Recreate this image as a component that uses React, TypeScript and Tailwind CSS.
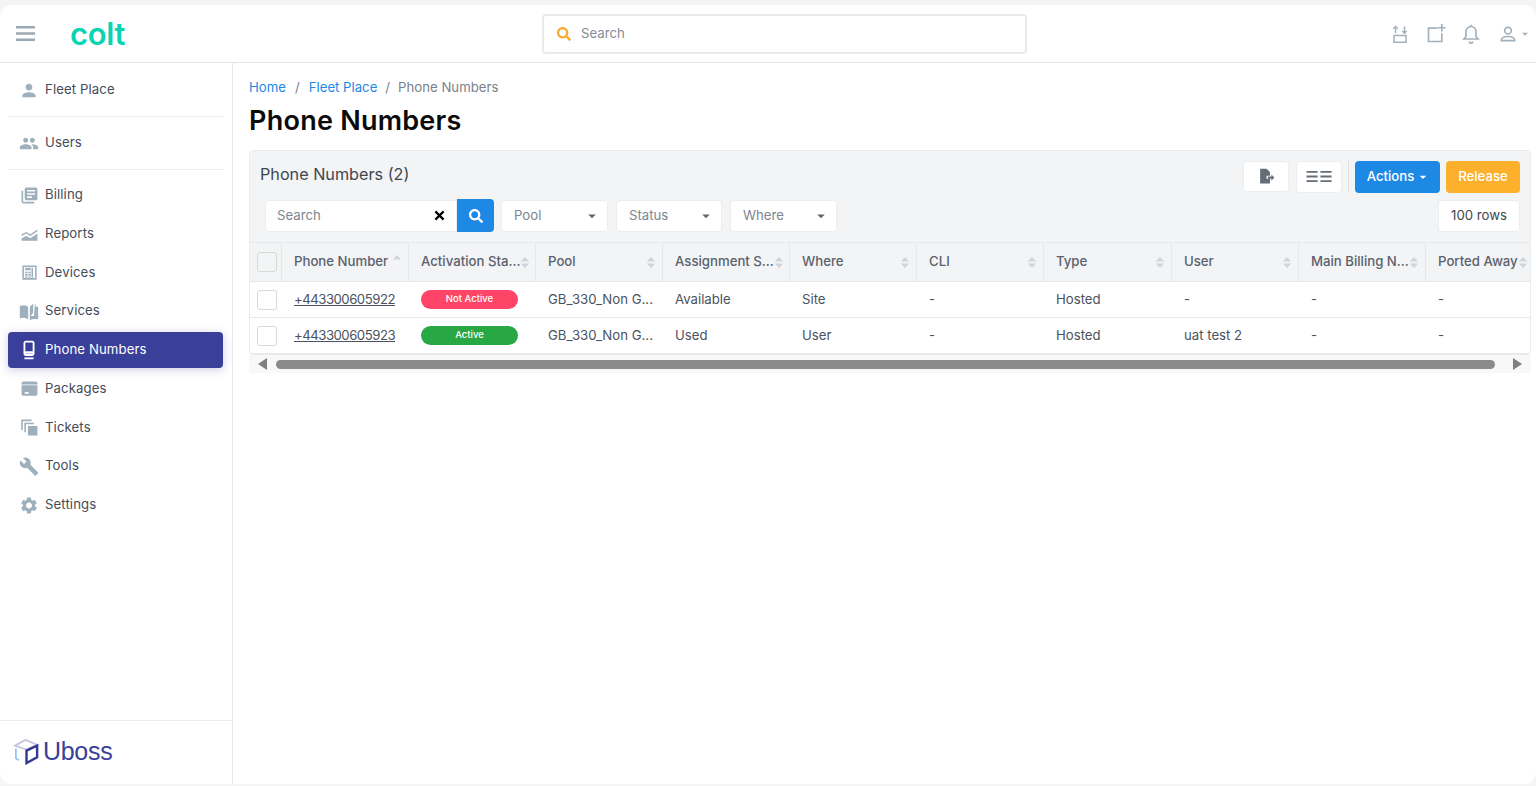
import React from "react";
import { MdPerson, MdPeople, MdLibraryBooks, MdBuild, MdSettings, MdArrowDropDown } from "react-icons/md";
import { FaSearch } from "react-icons/fa";

const ic = "w-[19px] h-[19px] fill-[#9fb0bd]";
const Reports = () => (
  <svg viewBox="0 0 24 24" className={ic}><path d="M2 20v-7l6-3 5 3 9-6v2l-9 6-5-3-6 3zm0 1v-3l6-3 5 3 9-6v9H2z" /></svg>
);
const Devices = () => (
  <svg viewBox="0 0 24 24" className={ic}><path fillRule="evenodd" d="M3 3h18v18H3V3zm2 2v14h14V5H5zm1.500 6h3v2h-3zm4 0h3v2h-3zm-4 3h3v2h-3zm4 0h3v2h-3zm-4 3h3v1.500h-3zm4 0h3v1.500h-3zm4-11h2v12.500h-2zm-8 0h7v3h-7z" /></svg>
);
const Services = () => (
  <svg viewBox="0 0 24 24" className="w-[20px] h-[20px] fill-[#9fb0bd]"><path d="M1 6c4-1.500 7-1 10 1v15c-3-2-6-2.500-10-1zM13 7l4-4v11l-3 4h4l1-14h1v3h3v15c-4-1-7-.5-10 1z" /></svg>
);
const Packages = () => (
  <svg viewBox="0 0 24 24" className={ic}><path fillRule="evenodd" d="M4 3h16a2 2 0 0 1 2 2v14a2 2 0 0 1-2 2H4a2 2 0 0 1-2-2V5a2 2 0 0 1 2-2zM2 7h20v.8H2zm4 9.500v2h5v-2H6z" /></svg>
);
const Tickets = () => (
  <svg viewBox="0 0 24 24" className={ic}><path d="M1.500 2h13v2h-11v11h-2V2zM5.500 6h12v2h-10v10h-2V6zM10 10h12v12H10z" /></svg>
);
const Phone = () => (
  <svg viewBox="0 0 24 24" className="w-[20px] h-[20px]" fill="none" stroke="#fff" strokeWidth="2.200"><rect x="6.500" y="2" width="11" height="16" rx="1.500" /><path d="M6.500 22h11" /><path d="M6.500 15h11" strokeWidth="3" /></svg>
);

function NavItem({ icon, label, active }: { icon: React.ReactNode; label: string; active?: boolean }) {
  return (
    <div className={`h-9 ml-2 mr-[9px] flex items-center rounded-[4px] pl-[11px] text-[13.200px] tracking-[0.1px] ${active ? "bg-[#3a3f9a] text-white shadow-[0_2px_10px_rgba(58,63,154,0.25)]" : "text-[#454c59]"}`}>
      <span className="w-[20px] flex justify-center shrink-0">{icon}</span>
      <span className="ml-[6px]">{label}</span>
    </div>
  );
}

function Sort({ up }: { up?: boolean }) {
  return (
    <svg viewBox="0 0 10 14" className={`w-[10px] h-[13px] shrink-0 fill-[#d0d5da] ${up ? "-mt-[3px]" : ""}`}>
      <path d="M5 1l4.500 5H.5z" />
      {!up && <path d="M5 13L.5 8h9z" />}
    </svg>
  );
}

const cols = [
  { t: "Phone Number", w: "w-[127px]", up: true },
  { t: "Activation Sta...", w: "w-[127px]" },
  { t: "Pool", w: "w-[127px]" },
  { t: "Assignment S...", w: "w-[127px]" },
  { t: "Where", w: "w-[127px]" },
  { t: "CLI", w: "w-[127px]" },
  { t: "Type", w: "w-[128px]" },
  { t: "User", w: "w-[127px]" },
  { t: "Main Billing N...", w: "w-[127px]" },
  { t: "Ported Away", w: "w-[104px]" },
];

function Check({ plain }: { plain?: boolean }) {
  return <span className={`block w-[20px] h-[20px] border border-[#d9d9d4] rounded-[3px] ${plain ? "bg-[#f3f4f5]" : "bg-white"}`} />;
}

function Cell({ w, children }: { w: string; children?: React.ReactNode }) {
  return <div className={`${w} shrink-0 pl-[12px] flex items-center overflow-hidden whitespace-nowrap`}>{children}</div>;
}

const valueWidths = ["w-[127px]", "w-[127px]", "w-[127px]", "w-[127px]", "w-[128px]", "w-[127px]", "w-[127px]", "w-[104px]"];

function Row({ num, pill, pillBg, values }: { num: string; pill: string; pillBg: string; values: string[] }) {
  return (
    <div className="flex h-[36px] text-[13.200px] text-[#4a5260] border-b border-[#e6e8ea]">
      <div className="w-[32px] shrink-0 flex items-center pl-[7px]"><Check /></div>
      <Cell w="w-[127px]"><span className="underline tracking-[-0.5px]">{num}</span></Cell>
      <Cell w="w-[127px]">
        <span className={`w-[97px] h-[19px] rounded-full flex items-center justify-center text-white text-[9.500px] font-medium ${pillBg}`}>{pill}</span>
      </Cell>
      {values.map((v, i) => (
        <Cell key={i} w={valueWidths[i]}>{v}</Cell>
      ))}
    </div>
  );
}

function Select({ label, w }: { label: string; w: string }) {
  return (
    <div className={`${w} h-[32px] bg-white rounded-[4px] border border-[#ebedef] flex items-center justify-between pl-[12px] pr-[6px] text-[13.200px] text-[#7c8591]`}>
      {label}
      <MdArrowDropDown className="w-[18px] h-[18px] text-[#5f6670]" />
    </div>
  );
}

export default function App() {
  return (
    <div className="h-[786px] w-[1536px] overflow-hidden bg-[#f5f5f5] pt-[5px] pb-[2px] font-['Inter',sans-serif] flex flex-col">
      <div className="flex-1 min-h-0 bg-white rounded-[12px] flex flex-col overflow-hidden">
        <header className="h-[58px] shrink-0 border-b border-[#e3e5e8] flex items-center">
          <div className="w-[232px] shrink-0 flex items-center pl-[16px]">
            <svg viewBox="0 0 19 15" className="w-[19px] h-[15px] fill-[#9aa8b3]"><path d="M0 0h19v2.500H0zM0 6.200h19v2.500H0zM0 12.500h19V15H0z" /></svg>
            <span className="ml-[35px] text-[31px] leading-none font-semibold text-[#0ad4b4] tracking-[-0.3px] -mt-[1px]">colt</span>
          </div>
          <div className="ml-[310px] w-[485px] h-[40px] rounded-[4px] border-2 border-[#e8eaee] flex items-center pl-[13px] text-[13.200px] text-[#848c97]">
            <FaSearch className="w-[14px] h-[14px] text-[#fbab2c]" />
            <span className="ml-[10px]">Search</span>
          </div>
          <div className="ml-auto flex items-center pr-[4px] text-[#a3b1bc]">
            <svg viewBox="0 0 24 24" className="w-[18px] h-[22px]" fill="none" stroke="#a3b1bc" strokeWidth="2"><path d="M6 11V2M3 5l3-3 3 3M18 2v9M15 8l3 3 3-3" /><rect x="4" y="14" width="16" height="9" /></svg>
            <svg viewBox="0 0 24 24" className="ml-[17px] w-[20px] h-[20px]" fill="none" stroke="#a3b1bc" strokeWidth="2"><path d="M14 5H3v16h16V11M19 0v9M14.500 4.500h9" /></svg>
            <svg viewBox="0 0 24 24" className="ml-[15px] w-[20px] h-[20px]" fill="none" stroke="#a3b1bc" strokeWidth="2"><path d="M12 3a6 6 0 0 0-6 6v6l-2.500 3h17L18 15V9a6 6 0 0 0-6-6zM12 1v2M10 21a2 2 0 0 0 4 0" /></svg>
            <svg viewBox="0 0 24 24" className="ml-[17px] w-[20px] h-[20px]" fill="none" stroke="#a3b1bc" strokeWidth="2"><circle cx="12" cy="8" r="4" /><path d="M4 20c0-3 3-5 8-5s8 2 8 5z" /></svg>
            <MdArrowDropDown className="w-[14px] h-[14px]" />
          </div>
        </header>
        <div className="flex-1 min-h-0 flex">
          <aside className="w-[233px] shrink-0 border-r border-[#e6e8ea] flex flex-col">
            <div className="flex-1 pt-[9px]">
              <NavItem icon={<MdPerson className="w-[21px] h-[21px] fill-[#9fb0bd]" />} label="Fleet Place" />
              <div className="ml-2 mr-[9px] mt-[8px] mb-[8px] border-t border-[#eceef0]" />
              <NavItem icon={<MdPeople className="w-[21px] h-[21px] fill-[#9fb0bd]" />} label="Users" />
              <div className="ml-2 mr-[9px] mt-[8px] mb-[7px] border-t border-[#eceef0]" />
              <div className="flex flex-col gap-[2.750px]">
                <NavItem icon={<MdLibraryBooks className={ic} />} label="Billing" />
                <NavItem icon={<Reports />} label="Reports" />
                <NavItem icon={<Devices />} label="Devices" />
                <NavItem icon={<Services />} label="Services" />
                <NavItem icon={<Phone />} label="Phone Numbers" active />
                <NavItem icon={<Packages />} label="Packages" />
                <NavItem icon={<Tickets />} label="Tickets" />
                <NavItem icon={<MdBuild className="w-[21px] h-[21px] fill-[#9fb0bd]" />} label="Tools" />
                <NavItem icon={<MdSettings className="w-[21px] h-[21px] fill-[#9fb0bd]" />} label="Settings" />
              </div>
            </div>
            <div className="h-[64px] border-t border-[#e9eaec] flex items-center pl-[13px] pb-[2px]">
              <svg viewBox="0 0 28 28" className="w-[27px] h-[27px]" fill="none">
                <path d="M2 8l11-6 12 5-11 5z" stroke="#c9c6e6" strokeWidth="2" />
                <path d="M14 13l11-5v12l-11 6z" stroke="#34398f" strokeWidth="2.500" />
                <path d="M3 11v10l3 2" stroke="#8cc6ea" strokeWidth="1.800" />
              </svg>
              <span className="font-['Liberation_Sans',sans-serif] text-[25px] leading-none text-[#3a3f9a] tracking-[-0.3px] ml-[3px]">Uboss</span>
            </div>
          </aside>
          <main className="flex-1 min-w-0 pl-[16px] pr-[5px] pt-[17px]">
            <nav className="h-[16px] flex items-center text-[13.200px] text-[#7a818c]">
              <span className="text-[#1e88e5]">Home</span>
              <span className="mx-[9px]">/</span>
              <span className="text-[#1e88e5]">Fleet Place</span>
              <span className="mx-[8px]">/</span>
              <span>Phone Numbers</span>
            </nav>
            <h1 className="mt-[8px] text-[27px] leading-[34px] font-semibold text-[#0b0b0b] tracking-[0.25px]">Phone Numbers</h1>
            <section className="mt-[12px] rounded-[4px] border border-[#e9ebed] bg-white">
              <div className="bg-[#f3f4f5] px-[10px] pt-[9px] pb-[10px]">
                <div className="flex items-center justify-between h-[33px]">
                  <h2 className="text-[16.200px] text-[#3f4650] font-normal -mt-[5px]">Phone Numbers (2)</h2>
                  <div className="flex items-center">
                    <div className="w-[46px] h-[31px] bg-white border border-[#ebedef] rounded-[4px] flex items-center justify-center">
                      <svg viewBox="0 0 24 24" className="w-[17px] h-[17px] fill-[#666d76]"><path d="M3 1h9l5 5v5h-5v4h5v7H3z" /><path d="M14 12h5V9l4 4.500-4 4.500v-3h-5z" /></svg>
                    </div>
                    <div className="ml-[7px] w-[46px] h-[32px] bg-white border border-[#ebedef] rounded-[4px] flex items-center justify-center">
                      <svg viewBox="0 0 28 14" className="w-[27px] h-[13px] fill-[#666d76]"><path d="M0 1h12v2H0zM0 6h12v2H0zM0 11h12v2H0zM15 1h12v2H15zM15 6h12v2H15zM15 11h12v2H15z" /></svg>
                    </div>
                    <div className="mx-[6px] w-px h-[33px] bg-[#dfe0e2]" />
                    <div className="w-[85px] h-[32px] rounded-[4px] bg-[#1e88e5] text-white text-[13.200px] font-medium flex items-center justify-center pl-[3px]">
                      Actions<MdArrowDropDown className="w-[16px] h-[16px] ml-[1px]" />
                    </div>
                    <div className="ml-[6px] w-[74px] h-[32px] rounded-[4px] bg-[#fdb02c] text-white text-[13.200px] font-medium flex items-center justify-center">Release</div>
                  </div>
                </div>
                <div className="flex items-center mt-[6px] pl-[5px]">
                  <div className="w-[192px] h-[32px] bg-white rounded-l-[4px] border border-[#ebedef] flex items-center justify-between pl-[11px] pr-[11px] text-[13.200px] text-[#7c8591]">
                    Search
                    <svg viewBox="0 0 12 12" className="w-[11px] h-[11px]" fill="none" stroke="#000" strokeWidth="2.400"><path d="M1.500 1.500l9 9M10.500 1.500l-9 9" /></svg>
                  </div>
                  <div className="w-[37px] h-[33px] bg-[#1e88e5] rounded-r-[4px] flex items-center justify-center">
                    <FaSearch className="w-[14px] h-[14px] text-white" />
                  </div>
                  <div className="ml-[7px]"><Select label="Pool" w="w-[107px]" /></div>
                  <div className="ml-[8px]"><Select label="Status" w="w-[106px]" /></div>
                  <div className="ml-[8px]"><Select label="Where" w="w-[107px]" /></div>
                  <div className="ml-auto w-[82px] h-[32px] bg-white rounded-[4px] border border-[#ebedef] flex items-center justify-center text-[13.200px] text-[#3f4650]">100 rows</div>
                </div>
              </div>
              <div className="flex h-[40px] bg-[#f3f4f5] border-y border-[#e6e8ea] text-[13.200px] font-medium text-[#5a626e]">
                <div className="w-[32px] shrink-0 flex items-center pl-[7px] border-r border-[#e6e8ea]"><Check plain /></div>
                {cols.map((c) => (
                  <div key={c.t} className={`${c.w} shrink-0 pl-[12px] pr-[6px] flex items-center justify-between whitespace-nowrap overflow-hidden border-r border-[#e6e8ea] last:border-r-0`}>
                    <span>{c.t}</span>
                    <Sort up={c.up} />
                  </div>
                ))}
              </div>
              <Row num="+443300605922" pill="Not Active" pillBg="bg-[#ff4567]" values={["GB_330_Non G...", "Available", "Site", "-", "Hosted", "-", "-", "-"]} />
              <Row num="+443300605923" pill="Active" pillBg="bg-[#28a745]" values={["GB_330_Non G...", "Used", "User", "-", "Hosted", "uat test 2", "-", "-"]} />
            </section>
            <div className="h-[18px] bg-[#f8f8f8] flex items-center px-[9px]">
              <span className="w-0 h-0 border-y-[6px] border-y-transparent border-r-[9px] border-r-[#7f7f7f]" />
              <div className="ml-[9px] w-[1219px] h-[9px] bg-[#8a8a8a] rounded-full" />
              <span className="ml-auto w-0 h-0 border-y-[6px] border-y-transparent border-l-[9px] border-l-[#7f7f7f]" />
            </div>
          </main>
        </div>
      </div>
    </div>
  );
}
